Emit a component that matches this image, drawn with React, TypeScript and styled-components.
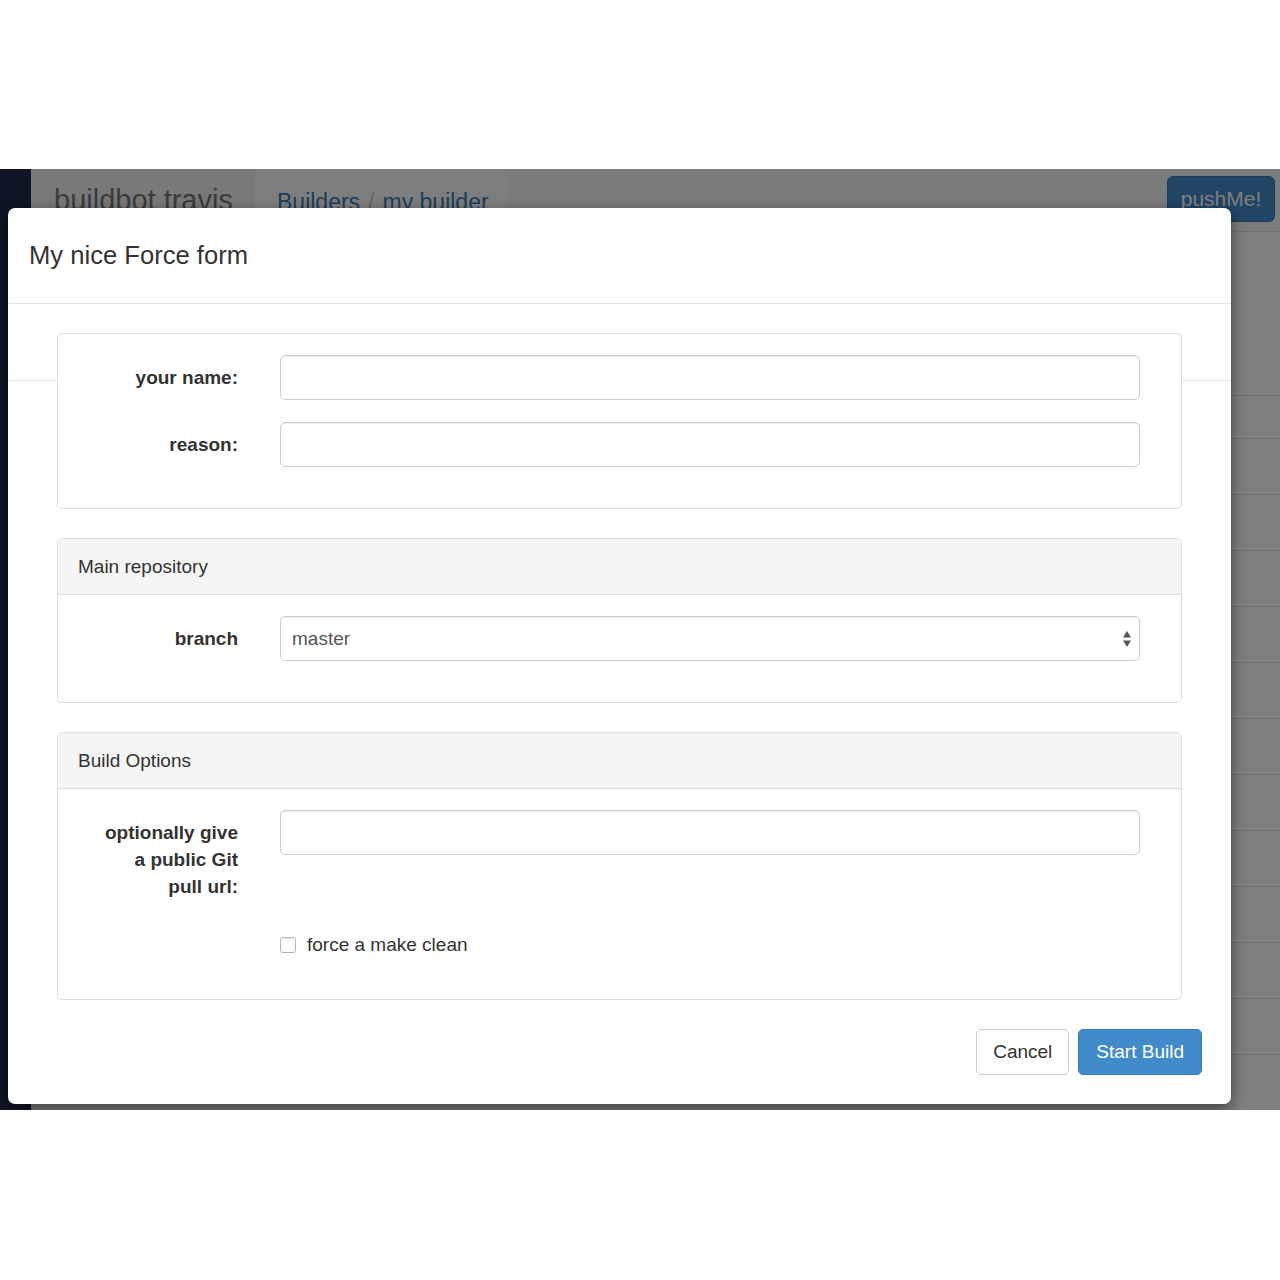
import React from "react";
import styled, { createGlobalStyle } from "styled-components";

const GlobalStyle = createGlobalStyle`
  html, body { margin: 0; padding: 0; background: #fff; }
  body { font-family: "Liberation Sans", Helvetica, Arial, sans-serif; color: #333; }
  * { box-sizing: border-box; }
`;

const Frame = styled.div`
  margin-top: 169px;
  height: 941px;
  position: relative;
  overflow: hidden;
  display: flex;
`;

const Sidebar = styled.aside`
  width: 31px;
  flex: none;
  background: #1e2b49;
`;

const Main = styled.div`
  flex: 1;
  display: flex;
  flex-direction: column;
  background: #fff;
`;

const Navbar = styled.header`
  height: 63px;
  flex: none;
  display: flex;
  align-items: flex-start;
  background: #f8f8f8;
  border-bottom: 1px solid #e0e0e0;
`;

const Brand = styled.div`
  width: 224px;
  padding: 13px 0 0 23px;
  font-size: 29px;
  color: #777;
  line-height: 36px;
  background: #f2f2f2;
  height: 62px;
`;

const Crumbs = styled.nav`
  display: flex;
  align-items: center;
  gap: 8px;
  padding: 9px 18px 0 22px;
  height: 56px;
  background: #fcfcfc;
  font-size: 23px;
  line-height: 30px;
`;

const CrumbLink = styled.span`
  color: #3d7cb8;
`;

const CrumbSep = styled.span`
  color: #ccc;
`;

const NavSpacer = styled.div`
  flex: 1;
`;

const PushButton = styled.button`
  margin: 7px 5px 0 0;
  height: 46px;
  width: 108px;
  border: 1px solid #357ebd;
  border-radius: 6px;
  background: #428bca;
  color: #fff;
  font-family: inherit;
  font-size: 21px;
`;

const Content = styled.div`
  padding-top: 163px;
`;

const TableHead = styled.div`
  height: 43px;
  border-top: 1px solid #ddd;
`;

const TableRow = styled.div`
  height: 56px;
  border-top: 1px solid #ddd;
`;

const Overlay = styled.div`
  position: absolute;
  inset: 0;
  background: rgba(0, 0, 0, 0.5);
  padding: 39px 0 0 8px;
`;

const Modal = styled.div`
  width: 1223px;
  background: #fff;
  border-radius: 7px;
  box-shadow: 0 5px 15px rgba(0, 0, 0, 0.5);
  overflow: hidden;
`;

const ModalHeader = styled.div`
  height: 96px;
  display: flex;
  align-items: center;
  padding: 0 21px;
  border-bottom: 1px solid #e5e5e5;
`;

const ModalTitle = styled.h4`
  margin: 0;
  font-size: 25.6px;
  font-weight: 500;
  color: #333;
`;

const ModalBody = styled.div`
  padding: 29px 49px 0;
  background-image: linear-gradient(#e8e8e8, #e8e8e8);
  background-size: 100% 1px;
  background-position: 0 76px;
  background-repeat: no-repeat;
`;

const Panel = styled.section`
  border: 1px solid #ddd;
  border-radius: 5px;
  background: #fff;
  margin-bottom: 29px;
  overflow: hidden;
`;

const PanelHeading = styled.div`
  height: 56px;
  display: flex;
  align-items: center;
  padding: 0 20px;
  background: #f5f5f5;
  border-bottom: 1px solid #ddd;
  font-size: 19px;
  color: #333;
`;

const PanelBody = styled.div`
  display: flex;
  flex-direction: column;
  gap: 22px;
  padding: 21px 41px 41px 0;
`;

const FormRow = styled.div`
  display: grid;
  grid-template-columns: 180px 1fr;
  column-gap: 42px;
  align-items: start;
`;

const Label = styled.label<{ $multi?: boolean }>`
  padding: ${(p) => (p.$multi ? "9px 0 0 40px" : "0 0 0 40px")};
  min-height: 45px;
  display: flex;
  align-items: ${(p) => (p.$multi ? "flex-start" : "center")};
  justify-content: flex-end;
  text-align: right;
  font-size: 19px;
  font-weight: 700;
  line-height: 27px;
  color: #333;
`;

const TextInput = styled.input`
  display: block;
  width: 100%;
  height: 45px;
  border: 1px solid #ccc;
  border-radius: 5px;
  box-shadow: inset 0 1px 1px rgba(0, 0, 0, 0.075);
  padding: 0 12px;
  font-family: inherit;
  font-size: 19px;
  color: #555;
  background: #fff;
  outline: none;
`;

const SelectBox = styled.div`
  height: 45px;
  border: 1px solid #ccc;
  border-radius: 5px;
  box-shadow: inset 0 1px 1px rgba(0, 0, 0, 0.075);
  display: flex;
  align-items: center;
  padding: 0 6px 0 11px;
  font-size: 19px;
  color: #555;
`;

const SelectValue = styled.span`
  flex: 1;
`;

const CheckRow = styled.div`
  padding: 9px 0 0 222px;
  display: flex;
  align-items: center;
  gap: 11px;
  font-size: 19px;
  line-height: 27px;
  color: #333;
`;

const CheckBox = styled.span`
  width: 16px;
  height: 16px;
  border: 1px solid #b4b4b4;
  border-radius: 3px;
  background: #fff;
  flex: none;
  box-shadow: inset 0 1px 1px rgba(0, 0, 0, 0.05);
`;

const ModalFooter = styled.div`
  display: flex;
  justify-content: flex-end;
  gap: 9px;
  padding: 0 29px 29px;
`;

const Button = styled.button<{ $primary?: boolean }>`
  height: 46px;
  padding: 0 ${(p) => (p.$primary ? 17 : 16)}px;
  border-radius: 5px;
  font-family: inherit;
  font-size: 19px;
  border: 1px solid ${(p) => (p.$primary ? "#357ebd" : "#ccc")};
  background: ${(p) => (p.$primary ? "#428bca" : "#fff")};
  color: ${(p) => (p.$primary ? "#fff" : "#333")};
`;

const Arrows = () => (
  <svg width="12" height="20" viewBox="0 0 12 20">
    <path d="M6 2 L10 8.5 L2 8.5 Z" fill="#555" />
    <path d="M2 11.5 L10 11.5 L6 18 Z" fill="#555" />
  </svg>
);

export default function App() {
  const rows = Array.from({ length: 12 });
  return (
    <>
      <GlobalStyle />
      <Frame>
        <Sidebar />
        <Main>
          <Navbar>
            <Brand>buildbot travis</Brand>
            <Crumbs>
              <CrumbLink>Builders</CrumbLink>
              <CrumbSep>/</CrumbSep>
              <CrumbLink>my builder</CrumbLink>
            </Crumbs>
            <NavSpacer />
            <PushButton>pushMe!</PushButton>
          </Navbar>
          <Content>
            <TableHead />
            {rows.map((_, i) => (
              <TableRow key={i} />
            ))}
          </Content>
        </Main>
        <Overlay>
          <Modal>
            <ModalHeader>
              <ModalTitle>My nice Force form</ModalTitle>
            </ModalHeader>
            <ModalBody>
              <Panel>
                <PanelBody>
                  <FormRow>
                    <Label>your name:</Label>
                    <TextInput />
                  </FormRow>
                  <FormRow>
                    <Label>reason:</Label>
                    <TextInput />
                  </FormRow>
                </PanelBody>
              </Panel>
              <Panel>
                <PanelHeading>Main repository</PanelHeading>
                <PanelBody>
                  <FormRow>
                    <Label>branch</Label>
                    <SelectBox>
                      <SelectValue>master</SelectValue>
                      <Arrows />
                    </SelectBox>
                  </FormRow>
                </PanelBody>
              </Panel>
              <Panel>
                <PanelHeading>Build Options</PanelHeading>
                <PanelBody>
                  <FormRow>
                    <Label $multi>optionally give a public Git pull url:</Label>
                    <TextInput />
                  </FormRow>
                  <CheckRow>
                    <CheckBox />
                    <span>force a make clean</span>
                  </CheckRow>
                </PanelBody>
              </Panel>
            </ModalBody>
            <ModalFooter>
              <Button>Cancel</Button>
              <Button $primary>Start Build</Button>
            </ModalFooter>
          </Modal>
        </Overlay>
      </Frame>
    </>
  );
}
